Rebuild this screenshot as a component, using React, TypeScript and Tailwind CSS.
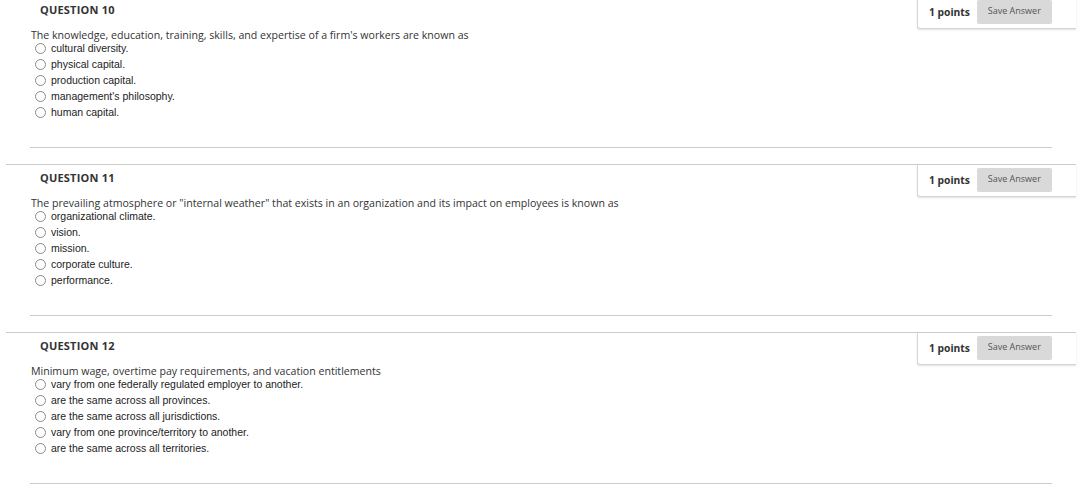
import React from "react";

type Q = { n: number; text: string; options: string[] };

const questions: Q[] = [
  {
    n: 10,
    text: "The knowledge, education, training, skills, and expertise of a firm's workers are known as",
    options: [
      "cultural diversity.",
      "physical capital.",
      "production capital.",
      "management's philosophy.",
      "human capital.",
    ],
  },
  {
    n: 11,
    text: 'The prevailing atmosphere or "internal weather" that exists in an organization and its impact on employees is known as',
    options: [
      "organizational climate.",
      "vision.",
      "mission.",
      "corporate culture.",
      "performance.",
    ],
  },
  {
    n: 12,
    text: "Minimum wage, overtime pay requirements, and vacation entitlements",
    options: [
      "vary from one federally regulated employer to another.",
      "are the same across all provinces.",
      "are the same across all jurisdictions.",
      "vary from one province/territory to another.",
      "are the same across all territories.",
    ],
  },
];

function Question({ q }: { q: Q }) {
  return (
    <div className="border-t border-[#cccccc] h-[168px]">
      <div className="flex justify-between items-start h-[32px]">
        <div
          className="pl-[34px] pt-[6px] text-[11px] leading-[14px] font-bold text-[#333333] tracking-[0.2px]"
          style={{ fontFamily: '"Open Sans", sans-serif' }}
        >
          QUESTION {q.n}
        </div>
        <div className="flex items-start h-[32px] w-[159px] bg-white border-l border-b border-[#d4d4d4] rounded-bl-[3px] shadow-[0_1px_2px_rgba(0,0,0,0.12)] pl-[11px] pr-[24px] pt-[3px]">
          <div
            className="text-[10.3px] font-bold text-[#333333] leading-[24px] w-[48px]"
            style={{ fontFamily: '"Open Sans", sans-serif' }}
          >
            1 points
          </div>
          <div
            className="w-[76px] h-[24px] bg-[#d9d9d9] rounded-[2px] text-[9px] text-[#555555] leading-[22px] text-center"
            style={{ fontFamily: '"Open Sans", sans-serif' }}
          >
            Save Answer
          </div>
        </div>
      </div>
      <div className="px-[24px]">
        <div
          className="pl-[1px] text-[10.6px] leading-[12px] text-[#333333]"
          style={{ fontFamily: '"Open Sans", sans-serif' }}
        >
          {q.text}
        </div>
        <div className="pl-[5px] mt-[-1px]">
          {q.options.map((o) => (
            <div key={o} className="flex items-center h-[16px]">
              <span className="w-[11px] h-[11px] rounded-full border border-[#8a8a8a] bg-white mr-[5px]" />
              <span
                className="text-[10.5px] text-[#222222] leading-[16px]"
                style={{ fontFamily: '"Liberation Sans", Arial, sans-serif' }}
              >
                {o}
              </span>
            </div>
          ))}
        </div>
        <div className="mt-[27px] border-t border-[#cccccc]" />
      </div>
    </div>
  );
}

export default function App() {
  return (
    <div className="w-[1088px] h-[496px] overflow-hidden bg-white">
      <div className="ml-[6px] w-[1070px] mt-[-4px]">
        {questions.map((q) => (
          <Question key={q.n} q={q} />
        ))}
      </div>
    </div>
  );
}
